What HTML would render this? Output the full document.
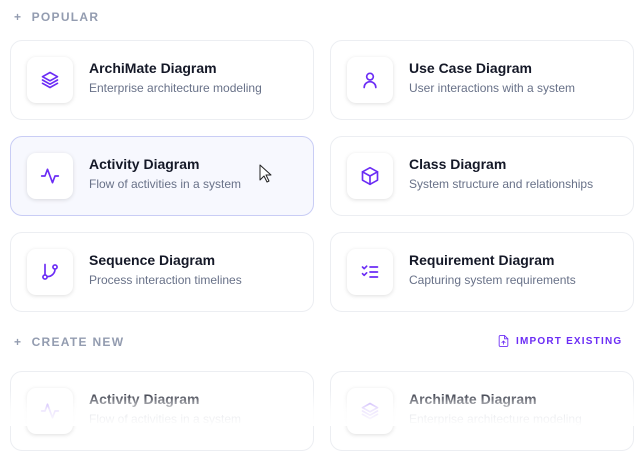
<!DOCTYPE html><html><head><style>
body{margin:0;width:643px;height:426px;background:#fff;font-family:"Liberation Sans",sans-serif;position:relative;overflow:hidden}
.h{position:absolute;font-size:12px;font-weight:bold;letter-spacing:1.3px;color:#939cb0}
.c{position:absolute;width:304px;height:80px;border:1px solid #eceef2;border-radius:12px;background:#fff;box-sizing:border-box}
.c.a{background:#f7f8fe;border-color:#c9cdf5}
.ic{position:absolute;left:16px;top:16px;width:46px;height:46px;border-radius:9px;background:#fff;box-shadow:0 1px 4px rgba(0,0,0,.13);display:flex;align-items:center;justify-content:center}
.t{position:absolute;left:78px;top:19px;font-size:14px;font-weight:bold;color:#141827}
.s{position:absolute;left:78px;top:40px;font-size:12px;color:#687188}
svg{width:20px;height:20px;fill:none;stroke:#6b2cf5;stroke-width:2;stroke-linecap:round;stroke-linejoin:round}
.fade{position:absolute;left:0;top:370px;width:643px;height:56px;background:linear-gradient(rgba(255,255,255,0) 0%,rgba(255,255,255,0) 35%,rgba(255,255,255,.8) 70%,#fff)}
</style></head><body>
<div class="h" style="left:14px;top:10px">+&nbsp;&nbsp;POPULAR</div>
<div class="c" style="left:10px;top:40px"><div class="ic"><svg viewBox="0 0 24 24"><path d="M12 3 3 8l9 5 9-5z"/><path d="m3 12 9 5 9-5"/><path d="m3 16 9 5 9-5"/></svg></div><div class="t">ArchiMate Diagram</div><div class="s">Enterprise architecture modeling</div></div>
<div class="c" style="left:330px;top:40px"><div class="ic"><svg viewBox="0 0 24 24"><circle cx="12" cy="8" r="4"/><path d="M5 21a7 7 0 0 1 14 0"/></svg></div><div class="t">Use Case Diagram</div><div class="s">User interactions with a system</div></div>
<div class="c a" style="left:10px;top:136px"><div class="ic"><svg viewBox="0 0 24 24"><path d="M2 12h4l3-8 6 16 3-8h4"/></svg></div><div class="t">Activity Diagram</div><div class="s">Flow of activities in a system</div></div>
<div class="c" style="left:330px;top:136px"><div class="ic"><svg viewBox="0 0 24 24"><path d="M12 2 3 7v10l9 5 9-5V7z"/><path d="m3 7 9 5 9-5M12 12v10"/></svg></div><div class="t">Class Diagram</div><div class="s">System structure and relationships</div></div>
<div class="c" style="left:10px;top:232px"><div class="ic"><svg viewBox="0 0 24 24"><circle cx="6" cy="18" r="2.5"/><circle cx="18" cy="6" r="2.5"/><path d="M6 3v12.5M18 8.5A9 9 0 0 1 9 17.5"/></svg></div><div class="t">Sequence Diagram</div><div class="s">Process interaction timelines</div></div>
<div class="c" style="left:330px;top:232px"><div class="ic"><svg viewBox="0 0 24 24"><path d="m3 6 2 2 3-3M3 14l2 2 3-3M12 6h9M12 12h9M12 18h9"/></svg></div><div class="t">Requirement Diagram</div><div class="s">Capturing system requirements</div></div>
<svg style="position:absolute;left:259px;top:164px;width:14px;height:20px;fill:#fff;stroke:#222;stroke-width:1" viewBox="0 0 14 20"><path d="M1 1v15l4-4 3 6 2-1-3-6h5z"/></svg>
<div class="h" style="left:14px;top:335px">+&nbsp;&nbsp;CREATE NEW</div>
<svg style="position:absolute;left:497px;top:334px;width:13px;height:14px;stroke-width:1.6" viewBox="0 0 24 24"><path d="M14 2H6a2 2 0 0 0-2 2v16a2 2 0 0 0 2 2h12a2 2 0 0 0 2-2V8z"/><path d="M14 2v6h6M12 18v-6M9 15l3-3 3 3"/></svg>
<div class="h" style="left:516px;top:336px;font-size:10px;color:#6b2cf5;letter-spacing:1.2px">IMPORT EXISTING</div>
<div class="c" style="left:10px;top:371px"><div class="ic"><svg viewBox="0 0 24 24" style="opacity:.6"><path d="M2 12h4l3-8 6 16 3-8h4"/></svg></div><div class="t">Activity Diagram</div><div class="s">Flow of activities in a system</div></div>
<div class="c" style="left:330px;top:371px"><div class="ic"><svg viewBox="0 0 24 24" style="opacity:.6"><path d="M12 3 3 8l9 5 9-5z"/><path d="m3 12 9 5 9-5"/><path d="m3 16 9 5 9-5"/></svg></div><div class="t">ArchiMate Diagram</div><div class="s">Enterprise architecture modeling</div></div>
<div class="fade"></div>
</body></html>
